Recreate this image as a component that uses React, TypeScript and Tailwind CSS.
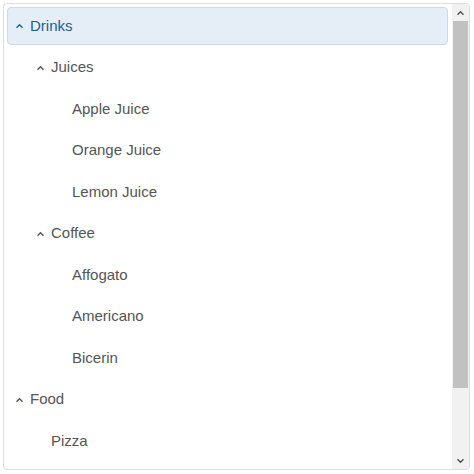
import React from 'react';

interface Node {
    label: string;
    level: number;
    parent?: boolean;
    selected?: boolean;
}

const items: Node[] = [
    { label: 'Drinks', level: 0, parent: true, selected: true },
    { label: 'Juices', level: 1, parent: true },
    { label: 'Apple Juice', level: 2 },
    { label: 'Orange Juice', level: 2 },
    { label: 'Lemon Juice', level: 2 },
    { label: 'Coffee', level: 1, parent: true },
    { label: 'Affogato', level: 2 },
    { label: 'Americano', level: 2 },
    { label: 'Bicerin', level: 2 },
    { label: 'Food', level: 0, parent: true },
    { label: 'Pizza', level: 1 },
];

const Caret = ({ className }: { className?: string }) => (
    <svg width="9" height="6" viewBox="0 0 9 6" className={className}>
        <path d="M1.5 4.8 L4.5 1.8 L7.5 4.8" fill="none" stroke="currentColor" strokeWidth="1.4" />
    </svg>
);

const padFor = ['pl-[7px]', 'pl-[28px]', 'pl-[49px]'];

export default function App() {
    return (
        <div className="w-[474px] h-[474px] bg-white p-[3px]" style={{ fontFamily: '"Liberation Sans", Arial, sans-serif' }}>
            <div className="w-[467px] h-[467px] border border-[#dedede] rounded-[4px] flex overflow-hidden">
                <div className="flex-1 overflow-hidden pt-[3px] pl-[3px] pr-[4px] flex flex-col gap-[3.5px]">
                    {items.map((it) => (
                        <div
                            key={it.label}
                            className={`shrink-0 h-[38px] flex items-center rounded-[4px] border text-[15px] ${padFor[it.level]} ${
                                it.selected ? 'bg-[#e5eef7] border-[#c9dbec] text-[#17609a]' : 'border-transparent text-[#555555]'
                            }`}
                        >
                            {it.parent ? (
                                <Caret className={`mr-[6px] ${it.selected ? 'text-[#17609a]' : 'text-[#555555]'}`} />
                            ) : (
                                <span className="w-[15px]" />
                            )}
                            <span>{it.label}</span>
                        </div>
                    ))}
                </div>
                <div className="w-[17px] bg-[#f1f1f1] flex flex-col">
                    <div className="h-[17px] flex items-center justify-center text-[#505050]">
                        <Caret />
                    </div>
                    <div className="mx-[1px] h-[367px] bg-[#c1c1c1]" />
                    <div className="flex-1" />
                    <div className="h-[17px] flex items-center justify-center text-[#505050]">
                        <Caret className="rotate-180" />
                    </div>
                </div>
            </div>
        </div>
    );
}
